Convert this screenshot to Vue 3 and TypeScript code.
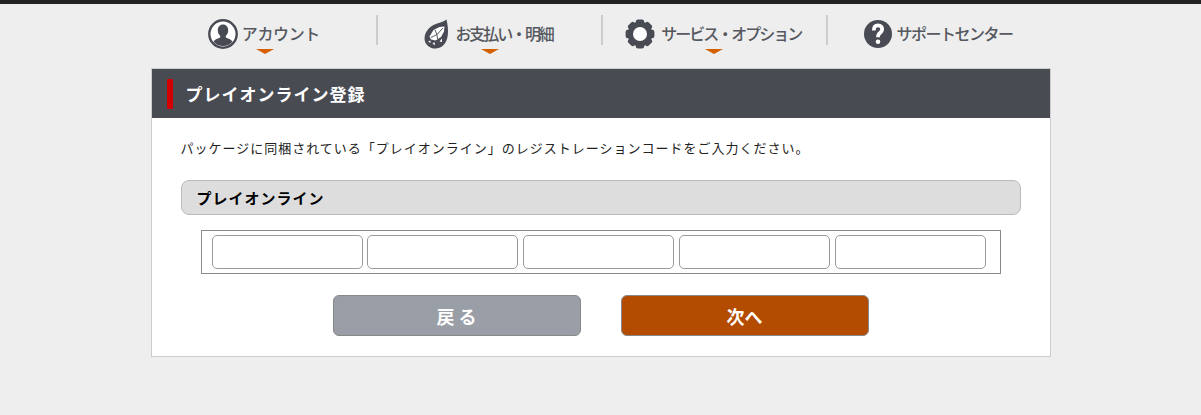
<script setup lang="ts">
interface NavItem {
  id: string;
  label: string;
  hasMenu: boolean;
}

const navItems: NavItem[] = [
  { id: 'account', label: 'アカウント', hasMenu: true },
  { id: 'payment', label: 'お支払い・明細', hasMenu: true },
  { id: 'service', label: 'サービス・オプション', hasMenu: true },
  { id: 'support', label: 'サポートセンター', hasMenu: false }
]

const codeFields = [0, 1, 2, 3, 4]

// eight teeth round the gear
const gearTeeth = [0, 45, 90, 135, 180, 225, 270, 315]
</script>

<template>
  <div class="page">
    <nav class="nav">
      <a v-for="item in navItems" :key="item.id" class="nav-item" :class="item.id">
        <svg v-if="item.id === 'account'" class="icon" width="30" height="30" viewBox="0 0 30 30">
          <circle cx="15" cy="15" r="13.700" fill="#fff" stroke="#484b53" stroke-width="2.400" />
          <path d="M15 5.600c-3.200 0-5.200 2.500-5.200 5.700 0 2.300.9 4.300 2.400 5.500v1.700c-1.600 1-5.600 1.700-6.600 4.200a12.200 12.200 0 0 0 18.800 0c-1-2.500-5-3.200-6.600-4.200v-1.700c1.500-1.200 2.400-3.200 2.400-5.500 0-3.200-2-5.700-5.200-5.700z" fill="#484b53" />
        </svg>
        <svg v-else-if="item.id === 'payment'" class="icon" width="25" height="30" viewBox="0 0 25 30">
          <path d="M22.500.4C23.800 6 24.800 13 23.200 19.300 21.600 25.700 17 29.600 11.500 29.600 5 29.600.5 25 .5 19.500.5 13 5 8.200 10 5.700 14 3.700 19 3 22.500.4z" fill="#484b53" />
          <path d="M5.500 17.500 9.500 11 15.500 8 20.500 7.500 20 12.500 17 18 11.500 21.500 7 20.500z" fill="#fff" />
          <path d="M7 18.500 13 15.500 19 9M11 11 13 15.500 13.500 20" stroke="#484b53" stroke-width=".9" fill="none" />
          <path d="M4 22.500 6.500 21.500 6.500 24zM8.500 24 11 23.500 10.500 26.500zM15.500 22.500 18 19.500 18 23z" fill="#fff" />
        </svg>
        <svg v-else-if="item.id === 'service'" class="icon" width="30" height="30" viewBox="0 0 30 30">
          <rect v-for="deg in gearTeeth" :key="deg" x="10.800" y=".6" width="8.400" height="7" rx="2.200" fill="#484b53" :transform="`rotate(${deg} 15 15)`" />
          <circle cx="15" cy="15" r="12.400" fill="#484b53" />
          <circle cx="15" cy="15" r="7" fill="#fff" />
        </svg>
        <svg v-else class="icon" width="28" height="28" viewBox="0 0 28 28">
          <circle cx="14" cy="14" r="14" fill="#484b53" />
          <path d="M9.800 10.500C9.800 7 11.500 5.300 14 5.300 16.500 5.300 18.200 7 18.200 9.300 18.200 11.500 16.300 12.500 15 13.800 14.200 14.600 14 15.500 14 17.300" fill="none" stroke="#fff" stroke-width="3.800" />
          <circle cx="14" cy="21.800" r="2.300" fill="#fff" />
        </svg>
        <span class="nav-label">{{ item.label }}</span>
        <span v-if="item.hasMenu" class="nav-arrow"></span>
      </a>
    </nav>

    <main class="panel">
      <h1 class="panel-title">プレイオンライン登録</h1>
      <div class="panel-body">
        <p class="lead">パッケージに同梱されている「プレイオンライン」のレジストレーションコードをご入力ください。</p>
        <h2 class="section-title">プレイオンライン</h2>
        <div class="code-box">
          <input v-for="field in codeFields" :key="field" class="code-input" type="text" />
        </div>
        <div class="actions">
          <button type="button" class="btn btn-back">戻 る</button>
          <button type="button" class="btn btn-next">次へ</button>
        </div>
      </div>
    </main>
  </div>
</template>

<style>
html,
body {
  background: #eeeeee;
}
</style>

<style scoped>
.page {
  min-height: 415px;
  box-sizing: border-box;
  border-top: 4px solid #222222;
  background: #eeeeee;
  font-family: "Noto Sans CJK JP", "Noto Sans", sans-serif;
}

.nav {
  display: flex;
  width: 900px;
  height: 64px;
  margin: 0 auto;
  box-sizing: border-box;
  padding-left: 1px;
}

.nav-item {
  position: relative;
  flex: 1;
  display: flex;
  align-items: center;
  justify-content: center;
  gap: 4px;
  height: 60px;
}

.nav-item:not(:last-child)::after {
  content: "";
  position: absolute;
  right: -2px;
  top: 11px;
  width: 2px;
  height: 30px;
  background: #cccccc;
}

.icon {
  flex: none;
  margin-bottom: 1px;
}

.nav-label {
  margin-bottom: 2px;
  color: #55585f;
  font-size: 16px;
  font-weight: 500;
  line-height: 20px;
  white-space: nowrap;
}

.account .nav-label {
  letter-spacing: -.4px;
}

.payment .nav-label {
  margin-left: 2px;
  letter-spacing: -2.100px;
}

.service .nav-label {
  margin-left: 2px;
  letter-spacing: -2px;
}

.support .nav-label {
  margin-left: 1px;
  letter-spacing: -1.500px;
}

.nav-arrow {
  position: absolute;
  left: 50%;
  top: 45px;
  margin-left: -8px;
  border-style: solid;
  border-width: 5px 9px 0;
  border-color: #d65f00 transparent transparent;
}

.panel {
  width: 900px;
  margin: 0 auto;
  box-sizing: border-box;
  border: 1px solid #cccccc;
  background: #ffffff;
}

.panel-title {
  position: relative;
  margin: 0;
  height: 49px;
  padding-left: 34px;
  background: #494b53;
  color: #ffffff;
  font-size: 17px;
  font-weight: 700;
  line-height: 50px;
  letter-spacing: 1px;
}

.panel-title::before {
  content: "";
  position: absolute;
  left: 15px;
  top: 10px;
  width: 6px;
  height: 30px;
  border-radius: 1px;
  background: #d40000;
}

.panel-body {
  padding: 20px 29px 20px;
}

.lead {
  margin: 0;
  color: #222222;
  font-size: 13px;
  line-height: 20px;
  letter-spacing: 1px;
}

.section-title {
  margin: 22px 0 0;
  height: 33px;
  padding-left: 15px;
  border: 1px solid #bbbbbb;
  border-radius: 8px;
  background: #dddddd;
  color: #000000;
  font-size: 15px;
  font-weight: 700;
  line-height: 34px;
  letter-spacing: 1px;
}

.code-box {
  display: flex;
  gap: 4.750px;
  width: 800px;
  box-sizing: border-box;
  margin: 15px auto 0;
  padding: 4px 10px;
  border: 1px solid #888888;
}

.code-input {
  width: 151px;
  height: 34px;
  box-sizing: border-box;
  padding: 0 6px;
  border: 1px solid #999999;
  border-radius: 5px;
  background: #ffffff;
  outline: none;
}

.actions {
  display: flex;
  justify-content: center;
  gap: 40px;
  margin-top: 21px;
}

.btn {
  width: 248px;
  height: 41px;
  padding: 0;
  border: 1px solid #888888;
  border-radius: 6px;
  color: #ffffff;
  font-family: inherit;
  font-size: 18px;
  font-weight: 700;
}

.btn-back {
  background: #9a9ea6;
}

.btn-next {
  background: #b34b00;
}
</style>
